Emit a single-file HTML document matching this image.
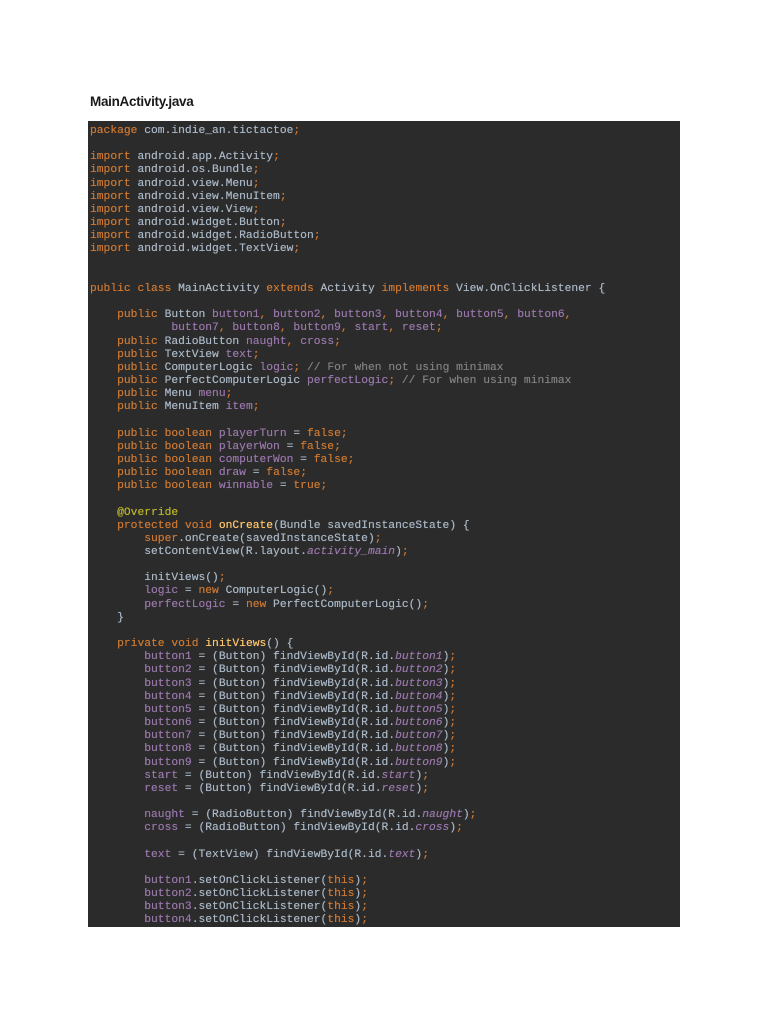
<!DOCTYPE html>
<html><head><meta charset="utf-8"><style>
body{margin:0;background:#fff;width:768px;height:1024px;position:relative;overflow:hidden}
.t{position:absolute;left:90px;top:94px;font:bold 13.5px "Liberation Sans",sans-serif;color:#1a1a1a;letter-spacing:-0.3px}
.box{position:absolute;left:88px;top:121px;width:592px;height:806px;background:#2b2b2b}
pre{margin:0;position:absolute;left:2px;top:4px;font:11.3px/13.15px "Liberation Mono",monospace;color:#a9b7c6;white-space:pre;text-shadow:0 0 0.4px currentColor}
.k{color:#cc7832}.f{color:#9876aa}.c{color:#808080}.m{color:#ffc66d}.a{color:#bbb529}.i{color:#9876aa;font-style:italic}
</style></head><body>
<div class="t">MainActivity.java</div>
<div class="box"><pre><span class="k">package</span> com.indie_an.tictactoe<span class="k">;</span>

<span class="k">import</span> android.app.Activity<span class="k">;</span>
<span class="k">import</span> android.os.Bundle<span class="k">;</span>
<span class="k">import</span> android.view.Menu<span class="k">;</span>
<span class="k">import</span> android.view.MenuItem<span class="k">;</span>
<span class="k">import</span> android.view.View<span class="k">;</span>
<span class="k">import</span> android.widget.Button<span class="k">;</span>
<span class="k">import</span> android.widget.RadioButton<span class="k">;</span>
<span class="k">import</span> android.widget.TextView<span class="k">;</span>


<span class="k">public class</span> MainActivity <span class="k">extends</span> Activity <span class="k">implements</span> View.OnClickListener {

    <span class="k">public</span> Button <span class="f">button1</span><span class="k">,</span> <span class="f">button2</span><span class="k">,</span> <span class="f">button3</span><span class="k">,</span> <span class="f">button4</span><span class="k">,</span> <span class="f">button5</span><span class="k">,</span> <span class="f">button6</span><span class="k">,</span>
            <span class="f">button7</span><span class="k">,</span> <span class="f">button8</span><span class="k">,</span> <span class="f">button9</span><span class="k">,</span> <span class="f">start</span><span class="k">,</span> <span class="f">reset</span><span class="k">;</span>
    <span class="k">public</span> RadioButton <span class="f">naught</span><span class="k">,</span> <span class="f">cross</span><span class="k">;</span>
    <span class="k">public</span> TextView <span class="f">text</span><span class="k">;</span>
    <span class="k">public</span> ComputerLogic <span class="f">logic</span><span class="k">;</span> <span class="c">// For when not using minimax</span>
    <span class="k">public</span> PerfectComputerLogic <span class="f">perfectLogic</span><span class="k">;</span> <span class="c">// For when using minimax</span>
    <span class="k">public</span> Menu <span class="f">menu</span><span class="k">;</span>
    <span class="k">public</span> MenuItem <span class="f">item</span><span class="k">;</span>

    <span class="k">public boolean</span> <span class="f">playerTurn</span> = <span class="k">false;</span>
    <span class="k">public boolean</span> <span class="f">playerWon</span> = <span class="k">false;</span>
    <span class="k">public boolean</span> <span class="f">computerWon</span> = <span class="k">false;</span>
    <span class="k">public boolean</span> <span class="f">draw</span> = <span class="k">false;</span>
    <span class="k">public boolean</span> <span class="f">winnable</span> = <span class="k">true;</span>

    <span class="a">@Override</span>
    <span class="k">protected void</span> <span class="m">onCreate</span>(Bundle savedInstanceState) {
        <span class="k">super</span>.onCreate(savedInstanceState)<span class="k">;</span>
        setContentView(R.layout.<span class="i">activity_main</span>)<span class="k">;</span>

        initViews()<span class="k">;</span>
        <span class="f">logic</span> = <span class="k">new</span> ComputerLogic()<span class="k">;</span>
        <span class="f">perfectLogic</span> = <span class="k">new</span> PerfectComputerLogic()<span class="k">;</span>
    }

    <span class="k">private void</span> <span class="m">initViews</span>() {
        <span class="f">button1</span> = (Button) findViewById(R.id.<span class="i">button1</span>)<span class="k">;</span>
        <span class="f">button2</span> = (Button) findViewById(R.id.<span class="i">button2</span>)<span class="k">;</span>
        <span class="f">button3</span> = (Button) findViewById(R.id.<span class="i">button3</span>)<span class="k">;</span>
        <span class="f">button4</span> = (Button) findViewById(R.id.<span class="i">button4</span>)<span class="k">;</span>
        <span class="f">button5</span> = (Button) findViewById(R.id.<span class="i">button5</span>)<span class="k">;</span>
        <span class="f">button6</span> = (Button) findViewById(R.id.<span class="i">button6</span>)<span class="k">;</span>
        <span class="f">button7</span> = (Button) findViewById(R.id.<span class="i">button7</span>)<span class="k">;</span>
        <span class="f">button8</span> = (Button) findViewById(R.id.<span class="i">button8</span>)<span class="k">;</span>
        <span class="f">button9</span> = (Button) findViewById(R.id.<span class="i">button9</span>)<span class="k">;</span>
        <span class="f">start</span> = (Button) findViewById(R.id.<span class="i">start</span>)<span class="k">;</span>
        <span class="f">reset</span> = (Button) findViewById(R.id.<span class="i">reset</span>)<span class="k">;</span>

        <span class="f">naught</span> = (RadioButton) findViewById(R.id.<span class="i">naught</span>)<span class="k">;</span>
        <span class="f">cross</span> = (RadioButton) findViewById(R.id.<span class="i">cross</span>)<span class="k">;</span>

        <span class="f">text</span> = (TextView) findViewById(R.id.<span class="i">text</span>)<span class="k">;</span>

        <span class="f">button1</span>.setOnClickListener(<span class="k">this</span>)<span class="k">;</span>
        <span class="f">button2</span>.setOnClickListener(<span class="k">this</span>)<span class="k">;</span>
        <span class="f">button3</span>.setOnClickListener(<span class="k">this</span>)<span class="k">;</span>
        <span class="f">button4</span>.setOnClickListener(<span class="k">this</span>)<span class="k">;</span></pre></div>
</body></html>
